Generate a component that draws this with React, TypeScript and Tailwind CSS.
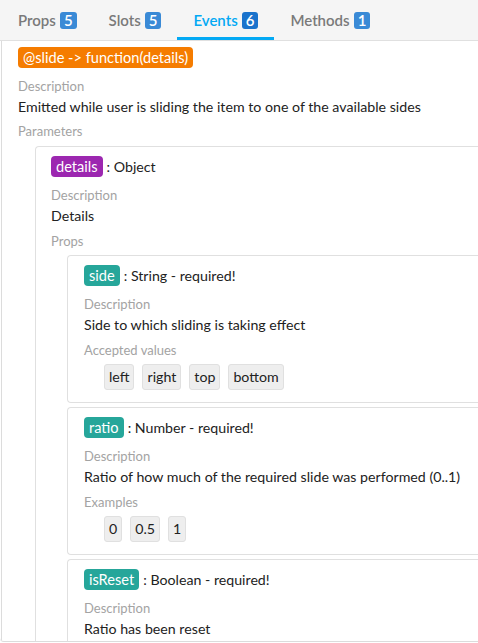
import React from 'react';

type Tab = { label: string; count: number; active?: boolean };

const tabs: Tab[] = [
  { label: 'Props', count: 5 },
  { label: 'Slots', count: 5 },
  { label: 'Events', count: 6, active: true },
  { label: 'Methods', count: 1 },
];

const Label: React.FC<{ children: React.ReactNode; className?: string }> = ({ children, className = '' }) => (
  <div className={`text-[13px] leading-5 text-[#a3a3a3] ${className}`}>{children}</div>
);

const Text: React.FC<{ children: React.ReactNode }> = ({ children }) => (
  <div className="whitespace-nowrap text-[14.2px] leading-[22px] text-[#222]">{children}</div>
);

const Chip: React.FC<{ children: React.ReactNode; color: string }> = ({ children, color }) => (
  <span className={`inline-block rounded-[4px] px-[5px] text-[14.6px] leading-[21px] text-white ${color}`}>{children}</span>
);

const Values: React.FC<{ items: string[] }> = ({ items }) => (
  <div className="ml-5 mt-1 flex gap-2">
    {items.map((v) => (
      <span
        key={v}
        className="rounded-[3px] border border-[#e0e0e0] bg-[#eeeeee] px-1 py-[2px] text-[14.2px] leading-5 text-[#222]"
      >
        {v}
      </span>
    ))}
  </div>
);

type Prop = {
  name: string;
  type: string;
  desc: string;
  valuesLabel?: string;
  values?: string[];
};

const props: Prop[] = [
  {
    name: 'side',
    type: 'String - required!',
    desc: 'Side to which sliding is taking effect',
    valuesLabel: 'Accepted values',
    values: ['left', 'right', 'top', 'bottom'],
  },
  {
    name: 'ratio',
    type: 'Number - required!',
    desc: 'Ratio of how much of the required slide was performed (0..1)',
    valuesLabel: 'Examples',
    values: ['0', '0.5', '1'],
  },
  {
    name: 'isReset',
    type: 'Boolean - required!',
    desc: 'Ratio has been reset',
  },
];

const Head: React.FC<{ chip: string; color: string; type: string }> = ({ chip, color, type }) => (
  <div className="flex items-center whitespace-nowrap text-[14.2px] leading-[21px] text-[#222]">
    <Chip color={color}>{chip}</Chip>
    <span className="ml-1">: {type}</span>
  </div>
);

const PropCard: React.FC<{ prop: Prop }> = ({ prop }) => (
  <div className="ml-4 mt-1 rounded-l-[4px] border border-r-0 border-[#e0e0e0] pb-3 pl-4 pt-[9px]">
    <Head chip={prop.name} color="bg-[#26a69a]" type={prop.type} />
    <Label className="mt-2">Description</Label>
    <Text>{prop.desc}</Text>
    {prop.values && (
      <>
        <Label className="mt-1">{prop.valuesLabel}</Label>
        <Values items={prop.values} />
      </>
    )}
  </div>
);

export default function App() {
  return (
    <div className="h-[643px] w-[478px] overflow-hidden bg-white" style={{ fontFamily: 'Lato, "Open Sans", sans-serif' }}>
      <div className="h-[642px] overflow-hidden rounded-bl-[4px] border-b border-[#dcdcdc]">
        {/* tabs */}
        <div className="flex h-[41px] border-b border-[#e0e0e0] bg-[#f5f5f5] pl-[2px]">
          {tabs.map((t) => (
            <div
              key={t.label}
              className={`flex items-center gap-1 px-4 text-[15px] font-semibold ${
                t.active ? 'border-b-[3px] border-[#03a9f4] pt-[3px] text-[#03a9f4]' : 'text-[#7a7a7a]'
              }`}
            >
              <span>{t.label}</span>
              <span
                className={`rounded-[3px] px-[4px] text-[15px] leading-[17px] text-white ${
                  t.active ? 'bg-[#1a73cc]' : 'bg-[#3a8ad6]'
                }`}
              >
                {t.count}
              </span>
            </div>
          ))}
        </div>

        {/* content */}
        <div className="ml-px h-full border-l border-[#dcdcdc] pl-[16px] pt-[6px]">
          <div className="flex">
            <Chip color="bg-[#f57c00]">@slide -&gt; function(details)</Chip>
          </div>
          <Label className="mt-2">Description</Label>
          <Text>Emitted while user is sliding the item to one of the available sides</Text>
          <Label className="mt-[3px]">Parameters</Label>

          <div className="ml-[17px] mt-[5px] rounded-l-[4px] border border-r-0 border-[#e0e0e0] pl-[15px] pt-[9px]">
            <Head chip="details" color="bg-[#9c27b0]" type="Object" />
            <Label className="mt-2">Description</Label>
            <Text>Details</Text>
            <Label className="mt-1">Props</Label>
            {props.map((p) => (
              <PropCard key={p.name} prop={p} />
            ))}
          </div>
        </div>
      </div>
    </div>
  );
}
